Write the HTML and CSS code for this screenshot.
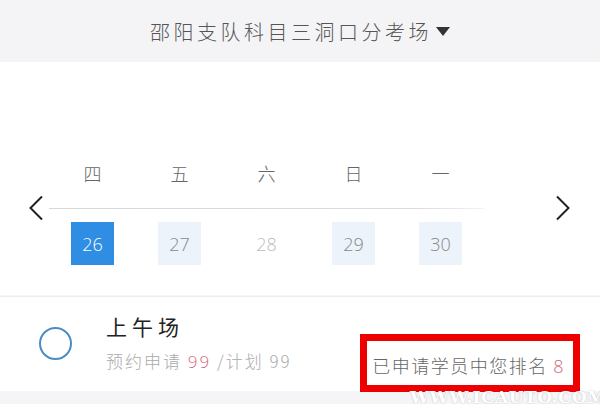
FILE: index.html
```html
<!DOCTYPE html>
<html lang="zh-CN">
<head>
    <meta charset="UTF-8">
    <meta name="viewport" content="width=device-width, initial-scale=1.0">
    <title>预约考试</title>
    <link rel="stylesheet" href="styles.css">
</head>
<body>

    <div class="header">
        <span class="header-title">邵阳支队科目三洞口分考场</span>
        <span class="header-caret"></span>
    </div>

    <div class="calendar">
        <div class="cal-arrow">
            <svg width="16" height="26" viewBox="0 0 16 26"><path d="M14 1.5 L2.5 13 L14 24.5" fill="none" stroke="#222" stroke-width="2"/></svg>
        </div>
        <div class="cal-main">
            <div class="cal-week">
                <span>四</span><span>五</span><span>六</span><span>日</span><span>一</span>
            </div>
            <div class="cal-line"></div>
            <div class="cal-days">
                <div class="cal-cell"><span class="day active">26</span></div>
                <div class="cal-cell"><span class="day open">27</span></div>
                <div class="cal-cell"><span class="day">28</span></div>
                <div class="cal-cell"><span class="day open">29</span></div>
                <div class="cal-cell"><span class="day open">30</span></div>
            </div>
        </div>
        <div class="cal-arrow cal-arrow-right">
            <svg width="16" height="26" viewBox="0 0 16 26"><path d="M2 1.5 L13.5 13 L2 24.5" fill="none" stroke="#222" stroke-width="2"/></svg>
        </div>
    </div>

    <div class="session">
        <div class="radio"></div>
        <div class="session-info">
            <div class="session-name">上午场</div>
            <div class="session-count">预约申请 <em>99</em> /计划 99</div>
        </div>
        <div class="session-rank">已申请学员中您排名 <em>8</em></div>
        <div class="mark-box"></div>
    </div>

    <div class="watermark">WWW.ICAUTO.COM.CN</div>

</body>
</html>
```

FILE: styles.css
```css
body {
    margin: 0;
    width: 600px;
    height: 404px;
    overflow: hidden;
    position: relative;
    background: #f5f5f8;
    font-family: "Noto Sans CJK SC", "Noto Sans", sans-serif;
}

.header {
    height: 62px;
    display: flex;
    align-items: center;
    justify-content: center;
    background: #f4f4f6;
}

.header-title {
    font-size: 20px;
    font-weight: 300;
    letter-spacing: 3.5px;
    color: #555;
}

.header-caret {
    width: 0;
    height: 0;
    margin-left: 4px;
    border-left: 7px solid transparent;
    border-right: 7px solid transparent;
    border-top: 9px solid #333;
}

.calendar {
    background: #fff;
    display: flex;
    align-items: center;
    padding: 89px 0 30px;
}

.cal-arrow {
    width: 49px;
    display: flex;
}

.cal-arrow svg {
    margin-left: 28px;
}

.cal-arrow-right {
    flex: 1;
}

.cal-arrow-right svg {
    margin-left: 71px;
}

.cal-main {
    width: 435px;
}

.cal-week,
.cal-days {
    display: grid;
    grid-template-columns: repeat(5, 1fr);
}

.cal-week {
    height: 43px;
    align-items: center;
}

.cal-week span {
    text-align: center;
    font-size: 18px;
    font-weight: 300;
    color: #666;
}

.cal-line {
    height: 1px;
    margin-top: 14px;
    background: linear-gradient(to right, #d8d8d8 0%, #dcdcdc 85%, #f2f2f2 100%);
}

.cal-days {
    margin-top: 13px;
}

.cal-cell {
    display: flex;
    justify-content: center;
}

.day {
    width: 43px;
    height: 43px;
    display: flex;
    align-items: center;
    justify-content: center;
    font-family: "Open Sans", "Noto Sans", sans-serif;
    font-weight: 300;
    font-size: 18px;
    color: #bbb;
}

.day.open {
    background: #edf3fa;
    color: #888;
}

.day.active {
    background: #2f8de4;
    color: #fff;
}

.session {
    margin-top: 1px;
    height: 94px;
    background: #fff;
    display: flex;
    align-items: center;
    position: relative;
    border-top: 1px solid #ececec;
}

.radio {
    width: 29px;
    height: 29px;
    margin-left: 39px;
    margin-top: -1px;
    border: 2px solid #4a8cc4;
    border-radius: 50%;
}

.session-info {
    margin-left: 34px;
    margin-top: -4px;
}

.session-name {
    font-size: 21px;
    font-weight: 400;
    letter-spacing: 5px;
    color: #222;
    line-height: 30px;
}

.session-count {
    margin-top: 8px;
    font-size: 17px;
    font-weight: 300;
    letter-spacing: 2px;
    color: #aaa;
    line-height: 24px;
}

.session-count em,
.session-rank em {
    font-style: normal;
    color: #d26a7a;
    font-family: "Open Sans", "Noto Sans", sans-serif;
}

.session-rank {
    margin-left: auto;
    margin-right: 35px;
    margin-top: 42px;
    font-size: 18px;
    font-weight: 300;
    letter-spacing: 1.5px;
    color: #666;
    line-height: 24px;
}

.mark-box {
    position: absolute;
    left: 360px;
    top: 37px;
    width: 206px;
    height: 44px;
    border: 7px solid #ee0000;
}

.watermark {
    position: absolute;
    left: 410px;
    top: 387px;
    font-family: "DejaVu Serif", serif;
    font-weight: bold;
    font-size: 17px;
    letter-spacing: 0.5px;
    color: #fff;
    text-shadow: 0 0 2px rgba(0, 0, 0, 0.25);
    white-space: nowrap;
}
```
